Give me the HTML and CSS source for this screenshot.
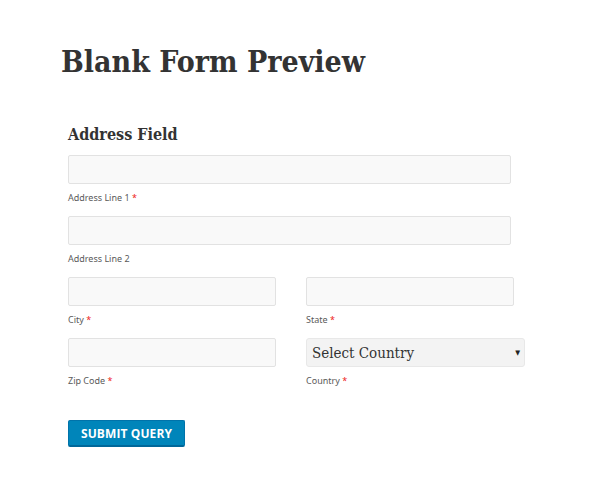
FILE: index.html
```html
<!DOCTYPE html>
<html>
<head>
<meta charset="utf-8">
<link rel="stylesheet" href="styles.css">
</head>
<body>
<div class="page">
  <h1 class="title">Blank Form Preview</h1>
  <form class="form">
    <h3 class="section">Address Field</h3>
    <div class="field full">
      <div class="input"></div>
      <div class="label">Address Line 1 <span class="req">*</span></div>
    </div>
    <div class="field full">
      <div class="input"></div>
      <div class="label">Address Line 2</div>
    </div>
    <div class="row">
      <div class="field half">
        <div class="input"></div>
        <div class="label">City <span class="req">*</span></div>
      </div>
      <div class="field half">
        <div class="input"></div>
        <div class="label">State <span class="req">*</span></div>
      </div>
    </div>
    <div class="row">
      <div class="field half">
        <div class="input"></div>
        <div class="label">Zip Code <span class="req">*</span></div>
      </div>
      <div class="field sel">
        <div class="select"><span>Select Country</span><span class="arrow">▼</span></div>
        <div class="label">Country <span class="req">*</span></div>
      </div>
    </div>
    <div class="actions">
      <button type="button" class="submit">SUBMIT QUERY</button>
    </div>
  </form>
</div>
</body>
</html>
```
FILE: styles.css
```css
html, body {
  margin: 0;
  padding: 0;
  background: #ffffff;
}
.page {
  padding: 42px 0 0 61px;
  color: #333333;
}
.title {
  margin: 0;
  font-family: "DejaVu Serif", serif;
  font-stretch: condensed;
  font-weight: bold;
  font-size: 30px;
  line-height: 40px;
  color: #333333;
}
.form {
  margin: 43px 0 0 7px;
  width: 460px;
}
.section {
  margin: 0 0 10px 0;
  font-family: "DejaVu Serif", serif;
  font-stretch: condensed;
  font-weight: bold;
  font-size: 16px;
  line-height: 20px;
  color: #333333;
}
.field {
  margin-bottom: 11px;
}
.full .input {
  width: 443px;
}
.row {
  display: flex;
  gap: 30px;
}
.half .input {
  width: 208px;
}
.input {
  box-sizing: border-box;
  height: 29px;
  background: #f9f9f9;
  border: 1px solid #e2e2e2;
  border-radius: 2px;
}
.sel .select {
  box-sizing: border-box;
  width: 219px;
  height: 29px;
  background: #f3f3f3;
  border: 1px solid #e8e8e8;
  border-radius: 3px;
  display: flex;
  align-items: center;
  justify-content: space-between;
  padding: 0 4px 0 5px;
  font-family: "DejaVu Serif", serif;
  font-stretch: condensed;
  font-size: 15px;
  color: #333333;
}
.arrow {
  font-family: "DejaVu Sans", sans-serif;
  font-size: 7px;
  color: #222;
}
.label {
  margin-top: 7px;
  font-family: "Noto Sans", sans-serif;
  font-size: 9px;
  line-height: 14px;
  color: #5a5a5a;
}
.req {
  color: #e22;
}
.actions {
  margin-top: 21px;
}
.submit {
  box-sizing: border-box;
  width: 117px;
  height: 27px;
  padding: 0;
  background: #0085ba;
  border: 1px solid #0073aa;
  border-bottom: 2px solid #006799;
  border-radius: 2px;
  color: #ffffff;
  font-family: "Open Sans", sans-serif;
  font-weight: bold;
  font-size: 12px;
  letter-spacing: 0.1px;
}
```
